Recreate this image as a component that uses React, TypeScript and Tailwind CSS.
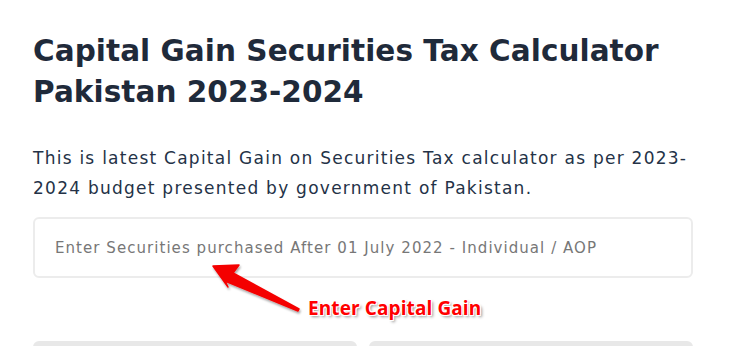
export default function App() {
  return (
    <div className="min-h-screen bg-white font-['DejaVu_Sans',sans-serif] text-[#1e293b]">
      <div className="w-[660px] ml-[33px] pt-[31px]">
        <h1 className="text-[29.5px] leading-[41px] font-bold tracking-[0.05px] text-[#1f2a3a]">
          Capital Gain Securities Tax Calculator Pakistan 2023-2024
        </h1>
        <p className="mt-[30px] text-[17px] leading-[30px] tracking-[1.25px] text-[#243247]">
          This is latest Capital Gain on Securities Tax calculator as per 2023-2024 budget presented by government of Pakistan.
        </p>

        <div className="relative mt-[14px]">
          <input
            type="text"
            placeholder="Enter Securities purchased After 01 July 2022 - Individual / AOP"
            className="w-full h-[61px] rounded-md border-2 border-[#ececec] px-[20px] font-['DejaVu_Sans',sans-serif] text-[15px] tracking-[1.05px] text-[#1f2937] placeholder:text-[#777] outline-none"
          />
          <svg className="absolute left-[167px] top-[38px]" width="110" height="70" viewBox="0 0 110 70">
            <defs>
              <filter id="sh" x="-20%" y="-20%" width="140%" height="140%">
                <feDropShadow dx="1" dy="2" stdDeviation="1.2" floodColor="#000" floodOpacity="0.35" />
              </filter>
            </defs>
            <path
              d="M13 11 L39 10 L33 18 L99 54 L98 56 L25 26 L28 32 Z"
              fill="#f40000"
              stroke="#f40000"
              strokeWidth="1.5"
              strokeLinejoin="round"
              filter="url(#sh)"
            />
          </svg>
        </div>

        <div className="h-[63px] flex items-center pl-[275px] pb-[3px]">
          <span className="font-['Open_Sans',sans-serif] font-bold text-[19px] tracking-[0.1px] text-[#f00] [text-shadow:1px_1px_0_#fff,-1px_-1px_0_#fff,1px_-1px_0_#fff,-1px_1px_0_#fff,2px_2px_3px_rgba(0,0,0,0.45)]">
            Enter Capital Gain
          </span>
        </div>

        <div className="grid grid-cols-2 gap-[12px]">
          <div className="h-[60px] rounded-md bg-[#e8e8e8]" />
          <div className="h-[60px] rounded-md bg-[#e8e8e8]" />
        </div>
      </div>
    </div>
  );
}
